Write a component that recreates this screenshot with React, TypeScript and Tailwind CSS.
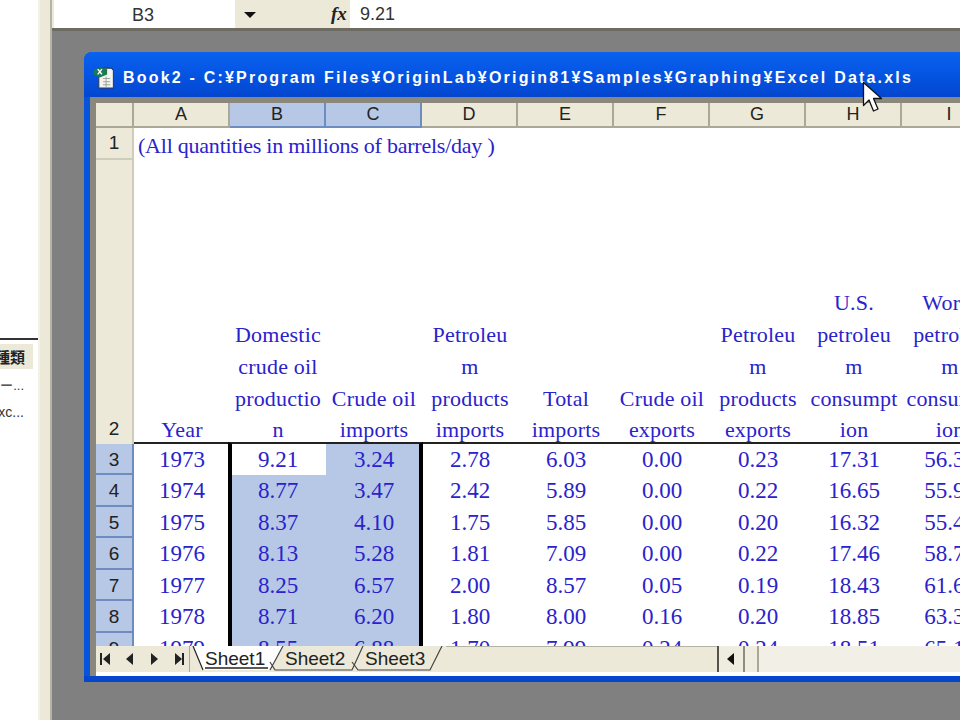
const serif = "font-['Liberation_Serif','Noto_Sans_CJK_JP',serif]";
const columns = ["A", "B", "C", "D", "E", "F", "G", "H", "I"];

const headerCells = [
  ["Year"],
  ["Domestic", "crude oil", "productio", "n"],
  ["Crude oil", "imports"],
  ["Petroleu", "m", "products", "imports"],
  ["Total", "imports"],
  ["Crude oil", "exports"],
  ["Petroleu", "m", "products", "exports"],
  ["U.S.", "petroleu", "m", "consumpt", "ion"],
  ["World", "petroleu", "m", "consumpt", "ion"],
];

const rows = [
  { n: 3, h: "h-[31px]", v: ["1973", "9.21", "3.24", "2.78", "6.03", "0.00", "0.23", "17.31", "56.39"] },
  { n: 4, h: "h-[32px]", v: ["1974", "8.77", "3.47", "2.42", "5.89", "0.00", "0.22", "16.65", "55.91"] },
  { n: 5, h: "h-[31px]", v: ["1975", "8.37", "4.10", "1.75", "5.85", "0.00", "0.20", "16.32", "55.48"] },
  { n: 6, h: "h-[32px]", v: ["1976", "8.13", "5.28", "1.81", "7.09", "0.00", "0.22", "17.46", "58.75"] },
  { n: 7, h: "h-[31px]", v: ["1977", "8.25", "6.57", "2.00", "8.57", "0.05", "0.19", "18.43", "61.63"] },
  { n: 8, h: "h-[32px]", v: ["1978", "8.71", "6.20", "1.80", "8.00", "0.16", "0.20", "18.85", "63.33"] },
  { n: 9, h: "h-[31px]", v: ["1979", "8.55", "6.88", "1.70", "7.99", "0.24", "0.24", "18.51", "65.10"] },
];

function ExcelIcon() {
  return (
    <svg width="24" height="25" viewBox="0 0 22 24" className="mr-[7px] shrink-0">
      <path d="M6 3h12l2 2v17H6z" fill="#f4f4ee" stroke="#2b3a55" strokeWidth="1" />
      <path d="M10 13h7M10 16h7M10 19h7M13 11v10" stroke="#9aa7a0" strokeWidth="1" />
      <path d="M1 5l7-3 6 2v5l-7 3-6-3z" fill="#1b7a52" />
      <path d="M5 4l4 5M9 4l-4 5" stroke="#ffffff" strokeWidth="1.4" />
    </svg>
  );
}

function Cursor() {
  return (
    <svg width="22" height="34" viewBox="0 0 22 34" className="absolute left-[862px] top-[81px]">
      <path
        d="M1.5 1.5v23l5.5-5.5 4.5 11 4.5-2-4.5-10.5h8z"
        fill="#ffffff"
        stroke="#111111"
        strokeWidth="1.3"
        strokeLinejoin="round"
      />
    </svg>
  );
}

function NavGlyphs() {
  return (
    <svg width="92" height="26" viewBox="0 0 92 26" className="shrink-0">
      <path d="M5 7v12" stroke="#222" strokeWidth="2" />
      <path d="M14 7v12l-7-6z" fill="#222" />
      <path d="M37 7v12l-7-6z" fill="#222" />
      <path d="M55 7v12l7-6z" fill="#222" />
      <path d="M79 7v12l7-6z" fill="#222" />
      <path d="M87 7v12" stroke="#222" strokeWidth="2" />
    </svg>
  );
}

function SheetTabs() {
  return (
    <div className="relative flex h-full w-[258px] shrink-0 items-center">
      <svg width="258" height="26" viewBox="0 0 258 26" className="absolute inset-0">
        <path d="M5 0l10 24h67l13-24z" fill="#ffffff" />
        <path d="M1.5 0v26" stroke="#a9a797" strokeWidth="1" />
        <path d="M5 0l10 24" stroke="#222" strokeWidth="1.2" fill="none" />
        <path d="M82 24l13-24M82 16l5 8h77l11-24M164 16l6 8h72l12-24" stroke="#444" strokeWidth="1.2" fill="none" />
        <path d="M17 22h63" stroke="#222" strokeWidth="1.5" />
      </svg>
      <span className="relative ml-[17px] w-[80px] text-[19px] text-[#222]">Sheet1</span>
      <span className="relative w-[80px] text-[19px] text-[#222]">Sheet2</span>
      <span className="relative text-[19px] text-[#222]">Sheet3</span>
    </div>
  );
}

export default function App() {
  return (
    <div className="relative flex h-[720px] w-[960px] overflow-hidden bg-[#808080] font-['Liberation_Sans',sans-serif]">
      {/* task pane cut off at the left */}
      <div className="flex w-[38px] shrink-0 flex-col overflow-hidden bg-white">
        <div className="mt-[338px] h-[2px] bg-[#333]" />
        <div className="mr-[5px] mt-[4px] flex h-[25px] items-center justify-end overflow-hidden bg-[#ece9d8] pr-[8px]">
          <span className="shrink-0 whitespace-nowrap font-['Noto_Sans_CJK_JP',sans-serif] text-[15px] font-bold leading-[25px] text-[#222]">
            種類
          </span>
        </div>
        <div className="flex h-[26px] items-end justify-end overflow-hidden pr-[14px] text-[13px] leading-[18px] text-[#333]">
          <span className="shrink-0">ー...</span>
        </div>
        <div className="flex h-[26px] items-end justify-end overflow-hidden pr-[14px] text-[14px] leading-[18px] text-[#333]">
          <span className="shrink-0">xc...</span>
        </div>
      </div>
      <div className="w-[14px] shrink-0 border-l-2 border-r-2 border-l-[#f4f2e6] border-r-[#b5b3a4] bg-[#ece9d8]" />

      <div className="flex min-w-0 flex-1 flex-col">
        {/* formula bar */}
        <div className="flex h-[28px] shrink-0 items-stretch bg-[#ece9d8]">
          <div className="ml-[2px] flex w-[181px] items-center bg-white pl-[78px] pt-[2px] text-[18px] text-[#333]">B3</div>
          <div className="relative w-[115px]">
            <span className="absolute left-[9px] top-[12px] h-0 w-0 border-x-[6px] border-t-[6px] border-x-transparent border-t-[#111]" />
            <span className={`absolute left-[96px] top-0 ${serif} text-[19px] font-bold italic text-[#222]`}>fx</span>
          </div>
          <div className="flex flex-1 items-center bg-white pl-[10px] pt-[1px] text-[18px] text-[#333]">9.21</div>
        </div>
        <div className="h-[3px] shrink-0 bg-[#6e6c62]" />

        {/* workbook window */}
        <div className="ml-[32px] mt-[21px] flex h-[630px] w-[940px] shrink-0 flex-col overflow-hidden rounded-t-[8px] bg-[#0754dc]">
          <div className="flex h-[45px] shrink-0 items-center bg-gradient-to-b from-[#0a62ee] via-[#0554e2] to-[#0346cf] pl-[8px] pt-[6px]">
            <ExcelIcon />
            <span className="whitespace-nowrap text-[16px] font-bold tracking-[2.2px] text-white">
              Book2 - C:¥Program Files¥OriginLab¥Origin81¥Samples¥Graphing¥Excel Data.xls
            </span>
          </div>
          <div className="mx-[6px] flex min-h-0 flex-1 flex-col border-l-[6px] border-t-[6px] border-[#8a887c] bg-white">
            {/* column headers */}
            <div className="flex h-[25px] shrink-0">
              <div className="w-[38px] shrink-0 border-b-2 border-r-2 border-[#aca899] bg-[#ece9d8]" />
              {columns.map((c) => (
                <div
                  key={c}
                  className={
                    c === "B" || c === "C"
                      ? "flex w-[96px] shrink-0 items-center justify-center border-b-2 border-r-2 border-[#6d8cc0] bg-[#b6c8e6] text-[18px] text-[#222]"
                      : "flex w-[96px] shrink-0 items-center justify-center border-b-2 border-r-2 border-[#aca899] bg-[#ece9d8] text-[18px] text-[#222]"
                  }
                >
                  {c}
                </div>
              ))}
            </div>

            {/* cells */}
            <div className={`relative min-h-0 flex-1 overflow-hidden ${serif} text-[22px] text-[#2a22cc]`}>
              <div className="flex h-[32px]">
                <div className="flex w-[38px] shrink-0 items-center justify-center border-b-2 border-r-2 border-[#cfccbc] bg-[#ece9d8] font-['Liberation_Sans',sans-serif] text-[19px] text-[#222]">
                  1
                </div>
                <div className="whitespace-nowrap pl-[4px] pt-[1px] tracking-[-0.23px]">
                  (All quantities in millions of barrels/day )
                </div>
              </div>
              <div className="flex h-[284px]">
                <div className="flex w-[38px] shrink-0 items-end justify-center border-r-2 border-[#cfccbc] bg-[#ece9d8] pb-[1px] font-['Liberation_Sans',sans-serif] text-[19px] text-[#222]">
                  2
                </div>
                {headerCells.map((lines, i) => (
                  <div key={i} className="flex w-[96px] shrink-0 flex-col justify-end border-b-2 border-[#222] tracking-[0.2px]">
                    {lines.map((line, j) => (
                      <div key={j} className="relative top-[4px] whitespace-nowrap text-center leading-[31.7px]">
                        {line}
                      </div>
                    ))}
                  </div>
                ))}
              </div>
              {rows.map((row) => (
                <div key={row.n} className={`flex ${row.h}`}>
                  <div className="flex w-[38px] shrink-0 items-center justify-center border-b-2 border-r-2 border-[#6d8cc0] bg-[#b6c8e6] pt-[3px] font-['Liberation_Sans',sans-serif] text-[19px] text-[#222]">
                    {row.n}
                  </div>
                  {row.v.map((val, i) => {
                    const active = row.n === 3 && i === 1;
                    const selected = i === 1 || i === 2;
                    return (
                      <div
                        key={i}
                        className={
                          selected && !active
                            ? "flex w-[96px] shrink-0 items-center justify-center bg-[#b6c8e6] pt-[1px] text-[23px]"
                            : "flex w-[96px] shrink-0 items-center justify-center pt-[1px] text-[23px]"
                        }
                      >
                        {val}
                      </div>
                    );
                  })}
                </div>
              ))}
              {/* selection outline */}
              <div className="absolute left-[132px] top-[314px] h-[400px] w-[195px] border-x-[4px] border-t-[2px] border-x-black border-t-[#222]" />
            </div>

            {/* sheet tabs and scroll bar */}
            <div className="flex h-[26px] shrink-0 items-stretch bg-[#ece9d8]">
              <NavGlyphs />
              <SheetTabs />
              <div className="w-[271px] shrink-0 border-t border-[#b5b3a4] bg-[#ece9d8]" />
              <div className="flex w-[28px] shrink-0 items-center border-l-2 border-[#55534a] bg-[#efede0]">
                <span className="ml-[8px] h-0 w-0 border-y-[6px] border-r-[7px] border-y-transparent border-r-[#111]" />
                <span className="ml-auto h-full w-[2px] bg-[#8f8d80]" />
              </div>
              <div className="w-[14px] shrink-0 border-r-2 border-[#a9a797] bg-[#efede0]" />
              <div className="flex-1 bg-[#f2f0e6]" />
            </div>
            <div className="h-[4px] shrink-0 bg-white" />
          </div>
          <div className="h-[6px] shrink-0 bg-[#0546cc]" />
        </div>
      </div>

      <Cursor />
    </div>
  );
}
